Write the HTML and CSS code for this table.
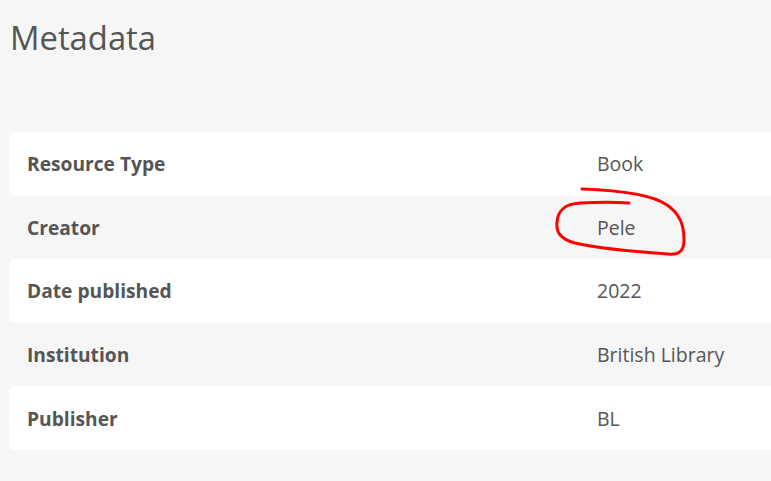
FILE: index.html
```html
<!DOCTYPE html>
<html>
<head>
<meta charset="utf-8">
<link rel="stylesheet" href="styles.css">
</head>
<body>
<div class="page">
  <h1 class="title">Metadata</h1>
  <dl class="meta">
    <div class="row odd"><dt class="label">Resource Type</dt><dd class="value">Book</dd></div>
    <div class="row"><dt class="label">Creator</dt><dd class="value">Pele</dd></div>
    <div class="row odd"><dt class="label">Date published</dt><dd class="value">2022</dd></div>
    <div class="row"><dt class="label">Institution</dt><dd class="value">British Library</dd></div>
    <div class="row odd"><dt class="label">Publisher</dt><dd class="value">BL</dd></div>
  </dl>
</div>
<svg class="scribble" width="771" height="481" viewBox="0 0 771 481">
  <path d="M582 189 C610 190 650 193 667 205 C680 214 684 225 684 240 C684 252 678 255 668 254 C640 252 600 249 575 243 C560 239 556 232 557 222 C558 210 565 204 580 203 C600 202 615 202 629 203" fill="none" stroke="#ff0000" stroke-width="3" stroke-linecap="round" stroke-linejoin="round"/>
</svg>
</body>
</html>
```
FILE: styles.css
```css
html, body {
  margin: 0;
  padding: 0;
  background: #f6f6f6;
  overflow: hidden;
  width: 771px;
  height: 481px;
}
body {
  font-family: "Open Sans", "Liberation Sans", sans-serif;
  color: #555555;
  position: relative;
}
.page {
  padding: 0 0 0 9px;
}
.title {
  margin: 0;
  padding: 16px 0 0 1px;
  font-size: 32.8px;
  font-weight: 400;
  line-height: 44px;
  color: #555555;
}
.meta {
  margin: 72px 0 0 0;
}
.row {
  display: flex;
  align-items: center;
  height: 63.6px;
  padding: 0 18px;
  border-radius: 6px 0 0 6px;
}
.row.odd {
  background: #ffffff;
}
.label {
  width: 570px;
  flex: none;
  font-weight: 700;
  font-size: 19.2px;
  margin: 0;
}
.value {
  margin: 0;
  font-size: 19.5px;
  font-weight: 400;
  white-space: nowrap;
}
.scribble {
  position: absolute;
  left: 0;
  top: 0;
  pointer-events: none;
}
```
